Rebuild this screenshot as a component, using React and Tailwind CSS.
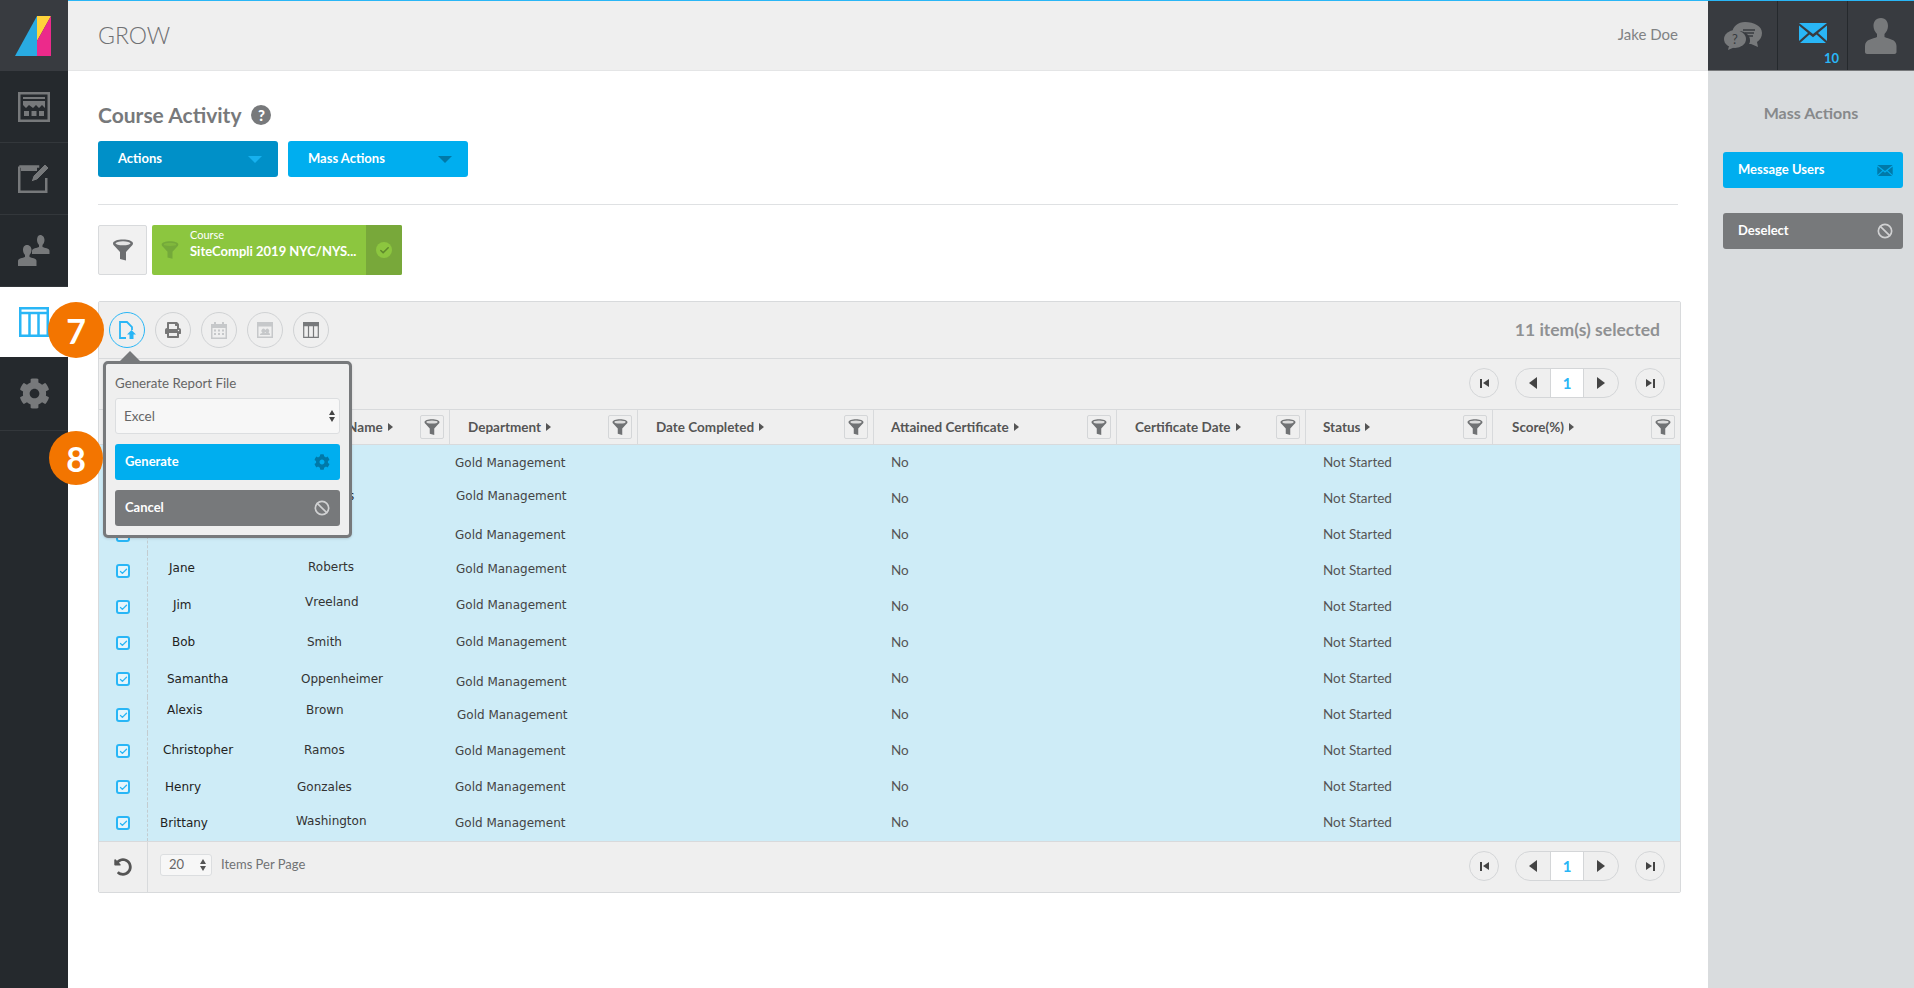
import React from "react";
import { FaCog, FaPrint, FaUndoAlt } from "react-icons/fa";
import { Ban, Check } from "lucide-react";

const COLS = "grid grid-cols-[49px_147px_155px_188px_236px_243px_189px_187px_1fr]";

const rows = [
  { first: "", fc: "", last: "", lc: "", dc: "ml-[5px]" },
  { first: "", fc: "", last: "Williams", lc: "ml-[9px] mb-[7px]", dc: "ml-[6px] mb-[7px]" },
  { first: "", fc: "", last: "", lc: "", dc: "ml-[5px]" },
  { first: "Jane", fc: "ml-[21px] mb-[7px]", last: "Roberts", lc: "ml-[13px] mb-[8px]", dc: "ml-[6px] mb-[5px]" },
  { first: "Jim", fc: "ml-[25px] mb-[5px]", last: "Vreeland", lc: "ml-[10px] mb-[10px]", dc: "ml-[6px] mb-[5px]" },
  { first: "Bob", fc: "ml-[24px] mb-[2px]", last: "Smith", lc: "ml-[12px] mb-[2px]", dc: "ml-[6px] mb-[2px]" },
  { first: "Samantha", fc: "ml-[19px]", last: "Oppenheimer", lc: "ml-[6px]", dc: "ml-[6px] mt-[5px]" },
  { first: "Alexis", fc: "ml-[19px] mb-[10px]", last: "Brown", lc: "ml-[11px] mb-[10px]", dc: "ml-[7px]" },
  { first: "Christopher", fc: "ml-[15px] mb-[2px]", last: "Ramos", lc: "ml-[9px] mb-[2px]", dc: "ml-[5px]" },
  { first: "Henry", fc: "ml-[17px]", last: "Gonzales", lc: "ml-[2px]", dc: "ml-[5px]" },
  { first: "Brittany", fc: "ml-[12px]", last: "Washington", lc: "ml-[1px] mb-[5px]", dc: "ml-[5px]" },
];

const columns = [
  { label: "First Name", pad: "pl-[19px]" },
  { label: "Last Name", pad: "pl-[24px]" },
  { label: "Department", pad: "pl-[18px]" },
  { label: "Date Completed", pad: "pl-[18px]" },
  { label: "Attained Certificate", pad: "pl-[17px]" },
  { label: "Certificate Date", pad: "pl-[18px]" },
  { label: "Status", pad: "pl-[17px]" },
  { label: "Score(%)", pad: "pl-[19px]" },
];

const Funnel = ({ className, rim = "#efefef" }) => (
  <svg viewBox="0 0 24 24" className={className}>
    <path fill="currentColor" d="M2 5.500C2 3 6.500 1.500 12 1.500S22 3 22 5.500c0 1-.7 1.800-1.500 2.500L15 14v8.500l-6-1.500v-7L3.500 8C2.700 7.300 2 6.500 2 5.500z" />
    <ellipse cx="12" cy="5.300" rx="7.500" ry="2" fill={rim} />
  </svg>
);

const Envelope = ({ className }) => (
  <svg viewBox="0 0 28 20" className={className} fill="currentColor">
    <path d="M0 0h28L14 11z" />
    <path d="M0 2.500 9 10 0 18zM28 2.500 19 10l9 8zM10.500 11.500 14 14.300l3.500-2.800L27 20H1z" />
  </svg>
);

const CaretRight = () => (
  <span className="ml-[5px] inline-block border-y-[4px] border-l-[5px] border-y-transparent border-l-[#555]" />
);

const UpDown = ({ color = "border-b-[#555]", colorDown = "border-t-[#555]" }) => (
  <span className="flex flex-col gap-[2px]">
    <span className={`border-x-[3px] border-b-[5px] border-x-transparent ${color}`} />
    <span className={`border-x-[3px] border-t-[5px] border-x-transparent ${colorDown}`} />
  </span>
);

const RowCheck = () => (
  <span className="flex h-[14px] w-[14px] items-center justify-center rounded-[3px] border-2 border-[#29b6f6] bg-[#e4f5fc]">
    <Check size={9} strokeWidth={3.5} className="text-[#29b6f6]" />
  </span>
);

const Pager = () => (
  <div className="flex items-center gap-[16px]">
    <button className="flex h-[30px] w-[30px] items-center justify-center rounded-full border border-[#d4d6d8] bg-[#efefef]">
      <span className="mr-[1px] h-[9px] w-[2px] bg-[#444]" />
      <span className="border-y-[4.500px] border-r-[6px] border-y-transparent border-r-[#444]" />
    </button>
    <div className="flex h-[30px] w-[104px] overflow-hidden rounded-full border border-[#d4d6d8] bg-[#efefef]">
      <span className="flex w-[35px] items-center justify-center border-r border-[#d4d6d8]">
        <span className="border-y-[6px] border-r-[8px] border-y-transparent border-r-[#444]" />
      </span>
      <span className="flex w-[32px] items-center justify-center bg-white text-[15px] font-bold text-[#29b6f6]">1</span>
      <span className="flex flex-1 items-center justify-center border-l border-[#d4d6d8]">
        <span className="border-y-[6px] border-l-[8px] border-y-transparent border-l-[#444]" />
      </span>
    </div>
    <button className="flex h-[30px] w-[30px] items-center justify-center rounded-full border border-[#d4d6d8] bg-[#efefef]">
      <span className="border-y-[4.500px] border-l-[6px] border-y-transparent border-l-[#444]" />
      <span className="ml-[1px] h-[9px] w-[2px] bg-[#444]" />
    </button>
  </div>
);

const ToolButton = ({ children, active }) => (
  <button
    className={`flex h-[36px] w-[36px] items-center justify-center rounded-full border ${
      active ? "border-[#29b6f6]" : "border-[#d0d2d4]"
    }`}
  >
    {children}
  </button>
);

const SideItem = ({ children, className = "h-[72px] border-[#33373b]" }) => (
  <div className={`flex items-center justify-center border-b ${className}`}>
    {children}
  </div>
);

const ActionButton = ({ label, color, icon }) => (
  <button className={`flex h-[36px] w-full items-center justify-between rounded-[3px] pl-[10px] pr-[10px] text-[13px] font-bold text-white ${color}`}>
    {label}
    {icon}
  </button>
);

export default function App() {
  return (
    <div className="relative flex h-[988px] w-[1914px] overflow-hidden bg-white font-['Lato',sans-serif] text-[#555]">
      {/* sidebar */}
      <aside className="w-[68px] shrink-0 bg-[#25292d]">
        <div className="flex h-[71px] items-center justify-center bg-[#383b40]">
          <svg width="68" height="71" viewBox="0 0 68 71">
            <polygon points="15,56 37,16 37,56" fill="#29abe2" />
            <polygon points="37,16 51,16 37,41" fill="#ffd33a" />
            <polygon points="37,41 51,16 51,56 37,56" fill="#ec2a8b" />
          </svg>
        </div>
        <SideItem>
          <svg width="32" height="30" viewBox="0 0 32 30" className="text-[#77797b]" fill="currentColor">
            <path d="M1.250 1.250h29.500v27.500H1.250z" fill="none" stroke="currentColor" strokeWidth="2.500" />
            <path d="M5 5h22v2H5zM5 9h22v7l-3-3-3 3-3-3-3 3-4-3-3 3-3-3zM6 19h5v5H6zM13.500 19h5v5h-5zM21 19h5v5h-5z" />
          </svg>
        </SideItem>
        <SideItem>
          <svg width="32" height="30" viewBox="0 0 32 30" className="text-[#77797b]" fill="currentColor">
            <path d="M1.250 2.500h20M1.250 2.500v25.250h27V14" fill="none" stroke="currentColor" strokeWidth="2.500" />
            <path d="M3 3h16v4H3z" />
            <path d="M27 0l4 4-12 12-6 2 2-6z" stroke="#25292d" strokeWidth="1" />
          </svg>
        </SideItem>
        <SideItem>
          <svg width="32" height="32" viewBox="0 0 32 32" className="text-[#77797b]" fill="currentColor">
            <path d="M22 0c3 0 4.500 2.500 4.500 5 0 2-1 4-2 5v2c2 1 7 1 7 4v3H14v-3c0-3 5-3 7-4v-2c-1-1-2-3-2-5 0-2.500 1-5 3-5z" />
            <path d="M9 10c3 0 4.500 2.500 4.500 5 0 2-1 4-2 5v2c2 1 7 1 7 4v5H0v-5c0-3 5-3 7-4v-2c-1-1-2-3-2-5 0-2.500 1-5 4-5z" />
          </svg>
        </SideItem>
        <SideItem className="h-[70px] border-transparent bg-white">
          <svg width="30" height="30" viewBox="0 0 30 30" fill="none" stroke="#29b6f6" strokeWidth="2.500">
            <path d="M1.250 1.250h27.500v27.500H1.250zM1.250 6h27.500M10.500 6v22.750M19.500 6v22.750" />
          </svg>
        </SideItem>
        <SideItem className="h-[74px] border-[#33373b]">
          <FaCog size={31} className="text-[#77797b]" />
        </SideItem>
      </aside>

      <div className="flex min-w-0 flex-1 flex-col border-t border-[#29b6f6]">
        {/* top bar */}
        <header className="flex h-[70px] shrink-0">
          <div className="flex flex-1 items-center justify-between border-b border-[#e4e5e6] bg-[#efefef] pl-[30px] pr-[30px]">
            <span className="text-[23px] font-light text-[#6f7173]">GROW</span>
            <span className="mb-[3px] text-[15px] text-[#808284]">Jake Doe</span>
          </div>
          <div className="flex w-[206px] border-b border-[#77797b] bg-[#383b40]">
            <div className="flex w-[70px] items-center justify-center border-r border-[#25292d]">
              <svg width="40" height="30" viewBox="0 0 40 30" fill="#77797b">
                <path d="M22 1c9 0 17 4 17 11 0 4-2 7-5 9l1 5-7-3h-2c1-1 1-3 1-4 0-5-5-9-11-9-3 0-5 1-7 2 1-7 6-11 13-11z" />
                <ellipse cx="12" cy="18" rx="11" ry="9" />
                <path d="M6 25l-1 4 7-3z" />
                <path d="M20 9h12M22 12h9M24 15h6" stroke="#383b40" strokeWidth="1.300" fill="none" />
                <text x="12" y="23" fontSize="13" textAnchor="middle" fill="#383b40" fontFamily="Lato">?</text>
              </svg>
            </div>
            <div className="relative flex w-[70px] items-center justify-center border-r border-[#25292d]">
              <Envelope className="mb-[6px] h-[20px] w-[28px] text-[#29b6f6]" />
              <span className="absolute bottom-[2px] right-[8px] text-[13px] font-bold text-[#29b6f6]">10</span>
            </div>
            <div className="flex flex-1 items-center justify-center">
              <svg width="32" height="36" viewBox="0 0 32 36" fill="#77797b">
                <path d="M16 0c5 0 7 4 7 8 0 3-1.500 6-3.500 8v3c4 2 12 2 12 9v6c0 1-1 2-2 2H2c-1 0-2-1-2-2v-6c0-7 8-7 12-9v-3c-2-2-3.500-5-3.500-8 0-4 2-8 7.500-8z" />
              </svg>
            </div>
          </div>
        </header>

        <div className="flex flex-1">
          {/* main content */}
          <main className="min-w-0 flex-1 pl-[30px] pr-[27px] pt-[30px]">
            <div className="flex h-[28px] items-center">
              <h1 className="text-[21px] font-bold text-[#77797b]">Course Activity</h1>
              <span className="ml-[10px] flex h-[20px] w-[20px] items-center justify-center rounded-full bg-[#77797b] text-[15px] font-black text-white">?</span>
            </div>

            <div className="mt-[12px] flex gap-[10px]">
              <button className="flex h-[36px] w-[180px] items-center justify-between rounded-[3px] bg-[#0090c8] pl-[20px] pr-[16px] text-[13px] font-bold text-white">
                Actions
                <span className="border-x-[7px] border-t-[7px] border-x-transparent border-t-[#16b1ef]" />
              </button>
              <button className="flex h-[36px] w-[180px] items-center justify-between rounded-[3px] bg-[#00aeef] pl-[20px] pr-[16px] text-[13px] font-bold text-white">
                Mass Actions
                <span className="border-x-[7px] border-t-[7px] border-x-transparent border-t-[#0079a8]" />
              </button>
            </div>

            <div className="mr-[3px] mt-[27px] h-px bg-[#dfe1e3]" />

            <div className="mt-[20px] flex gap-[5px]">
              <div className="flex h-[50px] w-[49px] items-center justify-center rounded-[2px] border border-[#d8dadc] bg-[#f1f1f1]">
                <Funnel className="h-[24px] w-[24px] text-[#6d6f71]" rim="#e4e4e4" />
              </div>
              <div className="flex h-[50px] w-[250px] overflow-hidden rounded-[2px] bg-[#8cc63f] text-white">
                <div className="flex w-[38px] items-center pl-[8px]">
                  <Funnel className="h-[20px] w-[20px] text-[#74a93a]" rim="#80b83c" />
                </div>
                <div className="flex-1 pt-[3px]">
                  <div className="text-[11px] leading-[14px]">Course</div>
                  <div className="text-[13px] font-bold leading-[18px]">SiteCompli 2019 NYC/NYS...</div>
                </div>
                <div className="flex w-[36px] items-center justify-center bg-[#78a83a]">
                  <span className="flex h-[16px] w-[16px] items-center justify-center rounded-full bg-[#8cc63f]">
                    <Check size={11} strokeWidth={3.500} className="text-[#5f8a2c]" />
                  </span>
                </div>
              </div>
            </div>

            {/* report card */}
            <section className="relative mt-[26px] rounded-[2px] border border-[#d8dadc]">
              <div className="flex h-[57px] items-center justify-between border-b border-[#d8dadc] bg-[#efefef] pl-[10px] pr-[20px]">
                <div className="flex gap-[10px]">
                  <ToolButton active>
                    <svg width="20" height="20" viewBox="0 0 20 20" fill="none" stroke="#29b6f6" strokeWidth="1.800">
                      <path d="M9 18H3V2h7l5 5v3" />
                      <path d="M14.500 10l4.500 4.500h-2.500V19h-4v-4.500H10z" fill="#29b6f6" stroke="none" />
                    </svg>
                  </ToolButton>
                  <ToolButton>
                    <FaPrint size={16} className="text-[#777]" />
                  </ToolButton>
                  <ToolButton>
                    <svg width="16" height="17" viewBox="0 0 16 17" fill="#c6c8ca">
                      <path d="M0 2h16v15H0zM1.500 6v9.500h13V6z" fillRule="evenodd" />
                      <path d="M3 0h2v3H3zM11 0h2v3h-2zM3 7.500h2v2H3zM7 7.500h2v2H7zM11 7.500h2v2h-2zM3 11h2v2H3zM7 11h2v2H7zM11 11h2v2h-2z" />
                    </svg>
                  </ToolButton>
                  <ToolButton>
                    <svg width="16" height="16" viewBox="0 0 16 16" fill="#c6c8ca">
                      <path d="M0 0h16v16H0zM1.500 4.500v10h13v-10z" fillRule="evenodd" />
                      <path d="M3 13c0-2 2-1.500 2.500-2.500a2 2 0 1 1 2 0C8 11.500 9 11 9 13zM9 13c0-1-.5-1.500-1-2 .5-.3 1-.2 1-.7a2 2 0 1 1 2.500 0c.5 1 1.500.7 1.500 2.700z" />
                    </svg>
                  </ToolButton>
                  <ToolButton>
                    <svg width="16" height="16" viewBox="0 0 16 16" fill="none" stroke="#77797b" strokeWidth="1.200">
                      <path d="M.7.700h14.600v14.600H.7zM5.500 4v11.300M10.500 4v11.300" />
                      <path d="M.7.700h14.600v3H.7z" fill="#77797b" />
                    </svg>
                  </ToolButton>
                </div>
                <span className="text-[17.500px] font-bold text-[#8f9193]">11 item(s) selected</span>
              </div>

              <div className="flex h-[51px] items-center justify-end border-b border-[#d8dadc] bg-[#efefef] pb-[2px] pr-[15px]">
                <Pager />
              </div>

              {/* column heads */}
              <div className={`${COLS} h-[35px] border-b border-[#d8dadc] bg-[#efefef]`}>
                <div className="border-r border-[#d8dadc]" />
                {columns.map((col, i) => (
                  <div
                    key={col.label}
                    className={`flex items-center justify-between pr-[5px] text-[13.500px] font-bold text-[#555] ${col.pad} ${
                      i < columns.length - 1 ? "border-r border-[#d8dadc]" : ""
                    }`}
                  >
                    <span className="flex items-center">
                      {col.label}
                      <CaretRight />
                    </span>
                    <span className="flex h-[24px] w-[24px] items-center justify-center rounded-[2px] border border-[#d4d6d8] bg-[#efefef]">
                      <Funnel className="h-[18px] w-[18px] text-[#707274]" rim="#dcdcdc" />
                    </span>
                  </div>
                ))}
              </div>

              {/* rows */}
              <div className="bg-[#ceecf7]">
                {rows.map((row, i) => (
                  <div key={i} className={`${COLS} h-[36px] items-center`}>
                    <div className="flex h-full items-center justify-center border-r border-dashed border-[#c3ccd0]">
                      <RowCheck />
                    </div>
                    <span className={`font-['DejaVu_Sans',sans-serif] text-[12px] leading-[16px] text-[#222] ${row.fc}`}>{row.first}</span>
                    <span className={`font-['DejaVu_Sans',sans-serif] text-[12px] leading-[16px] text-[#333] ${row.lc}`}>{row.last}</span>
                    <span className={`font-['DejaVu_Sans',sans-serif] text-[12px] leading-[16px] text-[#444] ${row.dc}`}>Gold Management</span>
                    <span />
                    <span className="mb-[2px] pl-[17px] text-[13.500px] text-[#555]">No</span>
                    <span />
                    <span className="mb-[2px] pl-[17px] text-[13.500px] text-[#555]">Not Started</span>
                    <span />
                  </div>
                ))}
              </div>

              {/* footer */}
              <div className="flex h-[51px] border-t border-[#d8dadc] bg-[#efefef]">
                <div className="flex w-[49px] items-center justify-center border-r border-[#d8dadc]">
                  <FaUndoAlt size={18} className="text-[#555]" />
                </div>
                <div className="flex flex-1 items-center justify-between pb-[2px] pr-[15px]">
                  <div className="mb-[2px] flex items-center">
                    <div className="ml-[12px] flex h-[22px] w-[52px] items-center justify-between rounded-[3px] border border-[#dcdee0] bg-[#f7f7f7] pl-[8px] pr-[5px] text-[13px] text-[#666]">
                      20
                      <UpDown />
                    </div>
                    <span className="ml-[9px] text-[13px] text-[#707274]">Items Per Page</span>
                  </div>
                  <Pager />
                </div>
              </div>

              {/* generate report popover */}
              <div className="absolute left-[4px] top-[59px] h-[177px] w-[249px] rounded-[5px] border-[3px] border-[#77797b] bg-[#efefef] px-[9px] pt-[9px] shadow-sm">
                <span className="absolute left-[14px] top-[-13px] border-x-[10px] border-b-[10px] border-x-transparent border-b-[#77797b]" />
                <div className="text-[13.300px] leading-[20px] text-[#666]">Generate Report File</div>
                <div className="mt-[5px] flex h-[36px] items-center justify-between rounded-[3px] border border-[#dcdee0] bg-[#f7f7f7] pl-[8px] pr-[4px] text-[13.500px] text-[#666]">
                  Excel
                  <UpDown color="border-b-[#444]" colorDown="border-t-[#444]" />
                </div>
                <div className="mt-[10px] flex flex-col gap-[10px]">
                  <ActionButton label="Generate" color="bg-[#00aeef]" icon={<FaCog size={16} className="text-[#0079a8]" />} />
                  <ActionButton label="Cancel" color="bg-[#77797b]" icon={<Ban size={16} strokeWidth={2.500} className="text-[#d0d1d2]" />} />
                </div>
              </div>
            </section>
          </main>

          {/* right panel */}
          <aside className="w-[206px] shrink-0 bg-[#d9dcde] px-[15px]">
            <div className="mt-[30px] text-center text-[16px] font-bold leading-[24px] text-[#87898b]">Mass Actions</div>
            <div className="mt-[27px]">
              <button className="flex h-[36px] w-[180px] items-center justify-between rounded-[3px] bg-[#00aeef] pl-[15px] pr-[10px] text-[13px] font-bold text-white">
                Message Users
                <Envelope className="h-[11px] w-[16px] text-[#0079a8]" />
              </button>
              <button className="mt-[25px] flex h-[36px] w-[180px] items-center justify-between rounded-[3px] bg-[#77797b] pl-[15px] pr-[10px] text-[13px] font-bold text-white">
                Deselect
                <Ban size={16} strokeWidth={2.500} className="text-[#d0d1d2]" />
              </button>
            </div>
          </aside>
        </div>
      </div>

      {/* callouts */}
      <span className="absolute left-[48px] top-[302px] flex h-[56px] w-[56px] items-center justify-center rounded-full bg-[#f37500] text-[34px] font-bold text-white">7</span>
      <span className="absolute left-[49px] top-[431px] flex h-[54px] w-[54px] items-center justify-center rounded-full bg-[#f37500] text-[34px] font-bold text-white">8</span>
    </div>
  );
}
